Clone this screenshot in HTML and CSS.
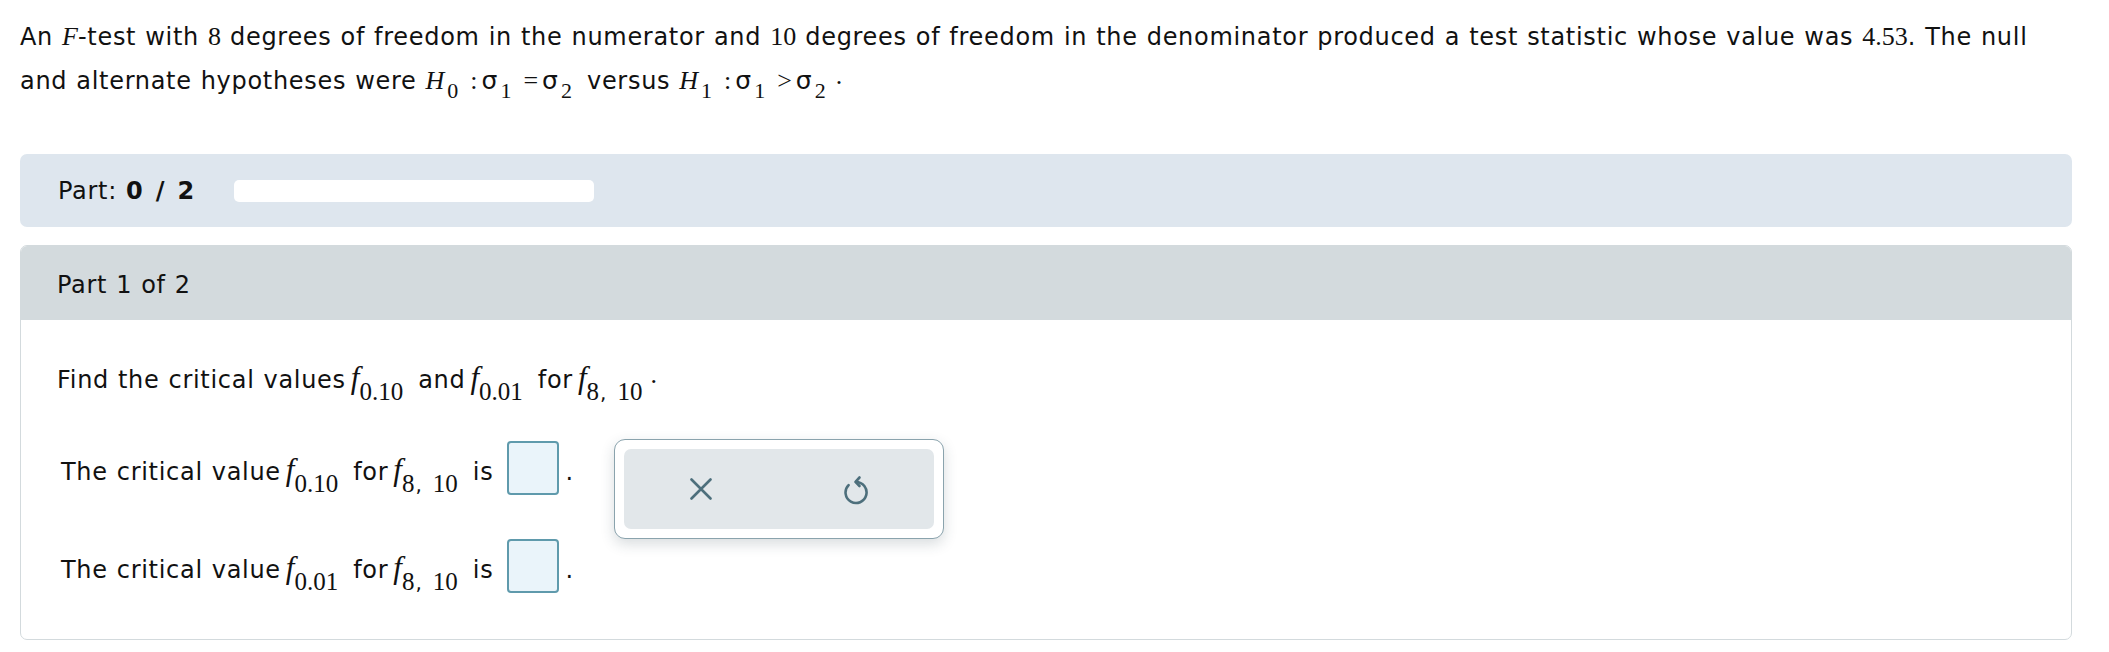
FILE: index.html
```html
<!DOCTYPE html>
<html lang="en">

<head>
    <meta charset="UTF-8">
    <title>F-test critical values</title>
    <link rel="stylesheet" href="styles.css">
</head>

<body>
    <main class="page">
        <p class="intro">
            An <span class="m"><i>F</i></span>-test with <span class="m">8</span> degrees of freedom in the numerator
            and <span class="m">10</span> degrees of freedom in the denominator produced a test statistic whose value
            was <span class="m">4.53</span>. The null and alternate hypotheses were
            <span class="m hyp"><i>H</i><sub>0</sub><span class="op">:</span><span class="sig">σ</span><sub>1</sub><span class="op">=</span><span class="sig">σ</span><sub>2</sub></span>
            versus
            <span class="m hyp"><i>H</i><sub>1</sub><span class="op">:</span><span class="sig">σ</span><sub>1</sub><span class="op">&gt;</span><span class="sig">σ</span><sub>2</sub></span><span class="dot">.</span>
        </p>

        <div class="progress">
            <span>Part: <b>0 / 2</b></span>
            <span class="bar"></span>
        </div>

        <section class="part">
            <header class="part-head">Part 1 of 2</header>

            <div class="part-body">
                <!-- math runs sit flush against the words; spacing comes from .fv margins -->
                <p class="prompt">Find the critical values<span class="fv"><i class="f">f</i><sub>0.10</sub></span>and<span class="fv"><i class="f">f</i><sub>0.01</sub></span>for<span class="fv last"><i class="f">f</i><sub>8<span class="comma">,</span>10</sub></span><span class="dot">.</span></p>

                <div class="answers">
                    <div class="rows">
                        <div class="row">
                            <span class="txt">The critical value<span class="fv"><i class="f">f</i><sub>0.10</sub></span>for<span class="fv"><i class="f">f</i><sub>8<span class="comma">,</span>10</sub></span>is</span>
                            <span class="box"></span>
                            <span class="end">.</span>
                        </div>
                        <div class="row">
                            <span class="txt">The critical value<span class="fv"><i class="f">f</i><sub>0.01</sub></span>for<span class="fv"><i class="f">f</i><sub>8<span class="comma">,</span>10</sub></span>is</span>
                            <span class="box"></span>
                            <span class="end">.</span>
                        </div>
                    </div>

                    <div class="tools">
                        <div class="tools-inner">
                            <button class="tool" title="Clear">
                                <svg width="22" height="22" viewBox="0 0 22 22">
                                    <path d="M1.5 1.5L20.5 20.5M20.5 1.5L1.5 20.5" stroke="#4d6f7c" stroke-width="2.6" stroke-linecap="round" fill="none" />
                                </svg>
                            </button>
                            <button class="tool" title="Undo">
                                <svg width="28" height="32" viewBox="0 0 28 32">
                                    <path d="M6.6 12.1A10.5 10.5 0 1 0 14 9" stroke="#4d6f7c" stroke-width="2.6" stroke-linecap="round" fill="none" />
                                    <path d="M17.5 4.5L13.5 8.8L17.5 13" stroke="#4d6f7c" stroke-width="2.6" stroke-linecap="round" stroke-linejoin="round" fill="none" />
                                </svg>
                            </button>
                        </div>
                    </div>
                </div>
            </div>
        </section>
    </main>
</body>

</html>
```

FILE: styles.css
```css
* {
    padding: 0;
    margin: 0;
    box-sizing: border-box;
}

body {
    font-family: "DejaVu Sans", Verdana, sans-serif;
    font-size: 24px;
    letter-spacing: 0.7px;
    word-spacing: 0.7px;
    color: #111;
    background: white;
}

.page {
    width: 2072px;
    padding: 15px 0 0 20px;
}

.intro {
    line-height: 43px;
}

/* math pieces */
.m,
.fv {
    font-family: "Liberation Serif", "Times New Roman", serif;
    font-size: 26px;
    letter-spacing: 0;
    word-spacing: 0;
    white-space: nowrap;
}

.m sub {
    font-size: 22px;
    vertical-align: -9px;
    line-height: 0;
    margin-left: 3px;
}

.hyp {
    margin-right: 6px;
}

.op {
    margin: 0 3px 0 12px;
}

.sig {
    font-family: "DejaVu Sans", sans-serif;
    font-size: 25px;
    padding: 0 1px;
}

.sig + sub {
    margin-left: 2px;
}

.dot {
    font-family: "Liberation Serif", serif;
    font-size: 26px;
    margin-left: 4px;
    position: relative;
    top: -5px;
}

.fv + .dot {
    margin-left: 8px;
}

/* f with a subscript, inside sentences */
.fv {
    margin: 0 15px 0 5px;
}

.fv.last {
    margin-right: 0;
}

.f {
    font-size: 31px;
}

.fv sub {
    font-size: 25px;
    vertical-align: -12px;
    line-height: 0;
}

.comma {
    font-family: "DejaVu Sans", sans-serif;
    font-size: 20px;
    margin: 0 11px 0 1px;
}

b {
    letter-spacing: 2px;
}

/* progress */
.progress {
    margin-top: 51px;
    height: 73px;
    background: #dee6ee;
    border-radius: 7px;
    padding: 0 38px;
    display: flex;
    align-items: center;
}

.bar {
    width: 360px;
    height: 22px;
    margin-left: 38px;
    background: white;
    border-radius: 5px;
}

/* part panel */
.part {
    margin-top: 18px;
    border: 1px solid #d3dadd;
    border-radius: 7px;
    overflow: hidden;
}

.part-head {
    height: 74px;
    background: #d3dadd;
    padding-left: 36px;
    display: flex;
    align-items: center;
    padding-top: 4px;
}

.part-body {
    padding: 36px 0 46px 36px;
}

.prompt {
    line-height: 43px;
}

.answers {
    display: flex;
    align-items: flex-start;
    gap: 40px;
    margin-top: 37px;
}

.rows {
    display: flex;
    flex-direction: column;
    gap: 44px;
    padding-top: 2px;
    padding-left: 4px;
}

.row {
    display: flex;
    align-items: center;
    height: 54px;
}

.txt {
    white-space: nowrap;
    position: relative;
    top: 2px;
}

.box {
    width: 52px;
    height: 54px;
    margin-left: 14px;
    border: 2px solid #5f9aac;
    border-radius: 4px;
    background: #eaf4fa;
}

.end {
    margin-left: 6px;
    position: relative;
    top: 4px;
}

/* clear / undo */
.tools {
    width: 330px;
    height: 100px;
    padding: 9px;
    border: 1px solid #8aa3ad;
    border-radius: 11px;
    background: white;
    box-shadow: 0 5px 14px rgba(40, 60, 70, 0.18);
}

.tools-inner {
    height: 100%;
    display: flex;
    background: #e2e7ea;
    border-radius: 7px;
}

.tool {
    flex: 1;
    border: none;
    background: none;
    display: flex;
    align-items: center;
    justify-content: center;
}
```
